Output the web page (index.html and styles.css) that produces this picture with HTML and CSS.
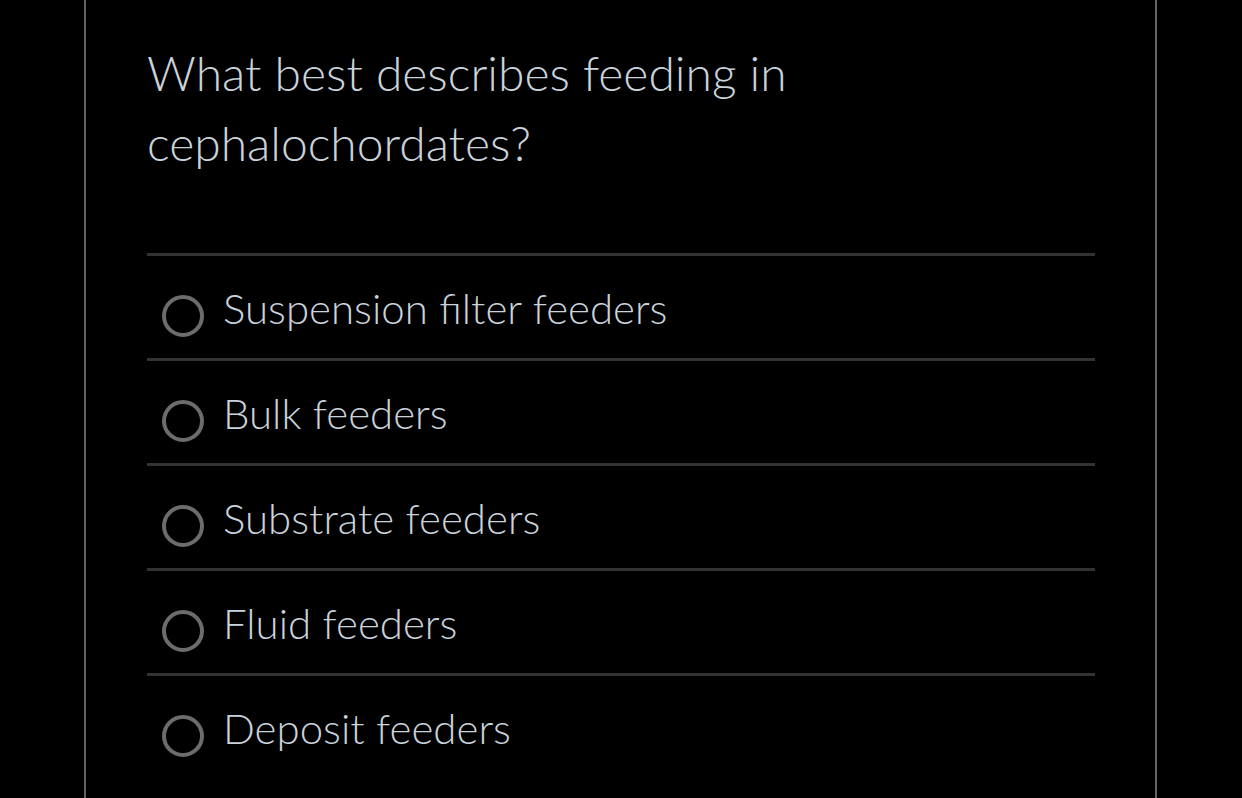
FILE: index.html
```html
<!DOCTYPE html>
<html lang="en">
<head>
<meta charset="utf-8">
<title>Question</title>
<link rel="stylesheet" href="styles.css">
</head>
<body>
<div class="card">
  <h1 class="question">What best describes feeding in cephalochordates?</h1>
  <ul class="options">
    <li class="option"><span class="radio"></span><span class="label">Suspension filter feeders</span></li>
    <li class="option"><span class="radio"></span><span class="label">Bulk feeders</span></li>
    <li class="option"><span class="radio"></span><span class="label">Substrate feeders</span></li>
    <li class="option"><span class="radio"></span><span class="label">Fluid feeders</span></li>
    <li class="option"><span class="radio"></span><span class="label">Deposit feeders</span></li>
  </ul>
</div>
</body>
</html>
```

FILE: styles.css
```css
html, body {
  margin: 0;
  padding: 0;
  background: #000;
  height: 100%;
  overflow: hidden;
}

body {
  font-family: Lato, "Open Sans", sans-serif;
  font-weight: 300;
  color: #c9d3db;
}

.card {
  margin-left: 84px;
  width: 948px;
  min-height: 100vh;
  border-left: 2px solid #646464;
  border-right: 2px solid #646464;
  padding: 38px 60px 0 61px;
  box-sizing: content-box;
}

.question {
  margin: 0;
  font-size: 48px;
  font-weight: 300;
  line-height: 70px;
  width: 700px;
}

.options {
  list-style: none;
  margin: 75px 0 0 0;
  padding: 0;
}

.option {
  display: flex;
  align-items: flex-start;
  height: 105px;
  border-top: 3px solid #333333;
  padding: 27px 0 0 15px;
  box-sizing: border-box;
}

.radio {
  flex: none;
  width: 42px;
  height: 42px;
  box-sizing: border-box;
  border: 4px solid #6c6c6c;
  border-radius: 50%;
  margin-top: 12px;
}

.label {
  margin-left: 19px;
  font-size: 42px;
  line-height: 50px;
  display: block;
}
```
